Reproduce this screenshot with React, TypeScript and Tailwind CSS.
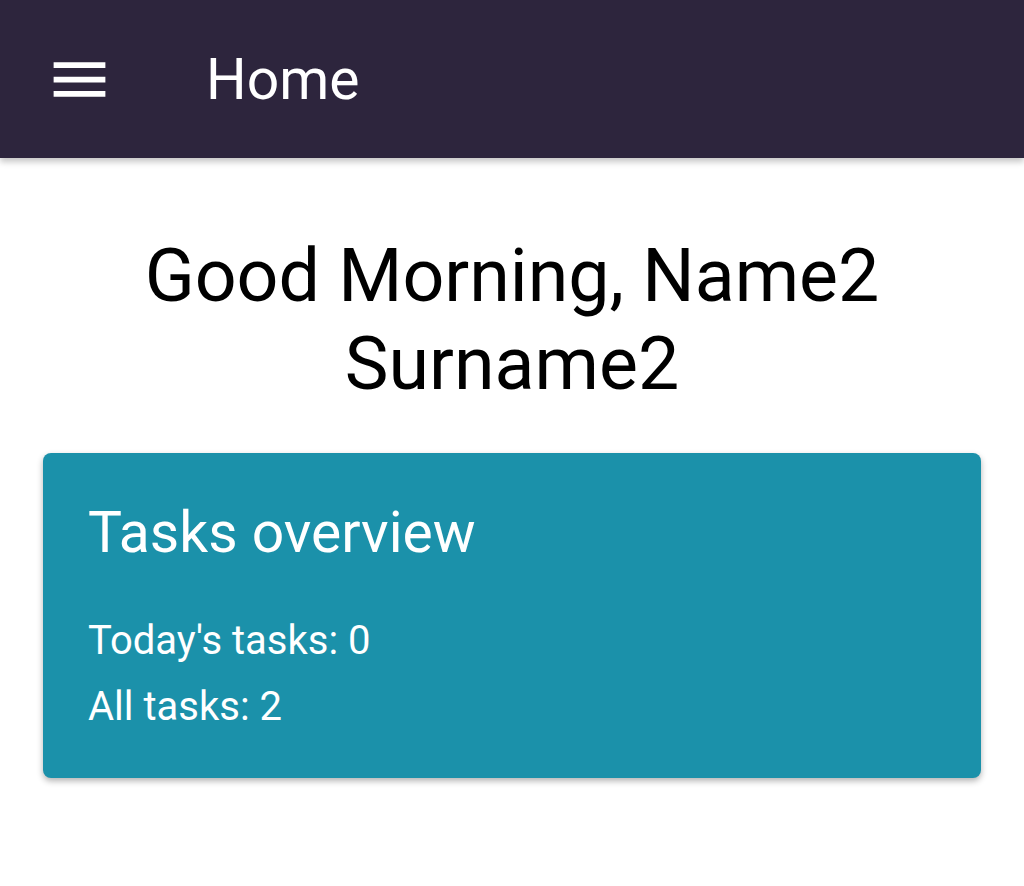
export default function App() {
  return (
    <div className="min-h-[886px] bg-white font-['Roboto',sans-serif]">
      {/* App bar */}
      <header className="relative z-10 flex h-[158px] items-center bg-[#2d253d] shadow-[0_4px_6px_rgba(0,0,0,0.22)]">
        <button aria-label="Menu" className="ml-[45px] flex h-[69px] w-[69px] items-center justify-center text-white">
          <svg viewBox="0 0 24 24" className="h-[69px] w-[69px]" fill="currentColor">
            <path d="M3 18h18v-2H3v2zm0-5h18v-2H3v2zm0-7v2h18V6H3z" />
          </svg>
        </button>
        <h1 className="ml-[92px] text-[57px] leading-none text-white">Home</h1>
      </header>

      {/* Greeting */}
      <h2 className="mt-[74px] px-8 text-center text-[73.5px] leading-[88px] text-black">
        Good Morning, Name2 Surname2
      </h2>

      {/* Tasks card */}
      <section className="mx-[43px] mt-[45px] rounded-[8px] bg-[#1b91aa] px-[45px] pt-[46px] pb-[38px] text-white shadow-[0_3px_6px_rgba(0,0,0,0.3)]">
        <h3 className="text-[57px] leading-[67px]">Tasks overview</h3>
        <div className="mt-[42px] text-[40px] leading-[66px]">
          <p>Today's tasks: 0</p>
          <p>All tasks: 2</p>
        </div>
      </section>
    </div>
  );
}
